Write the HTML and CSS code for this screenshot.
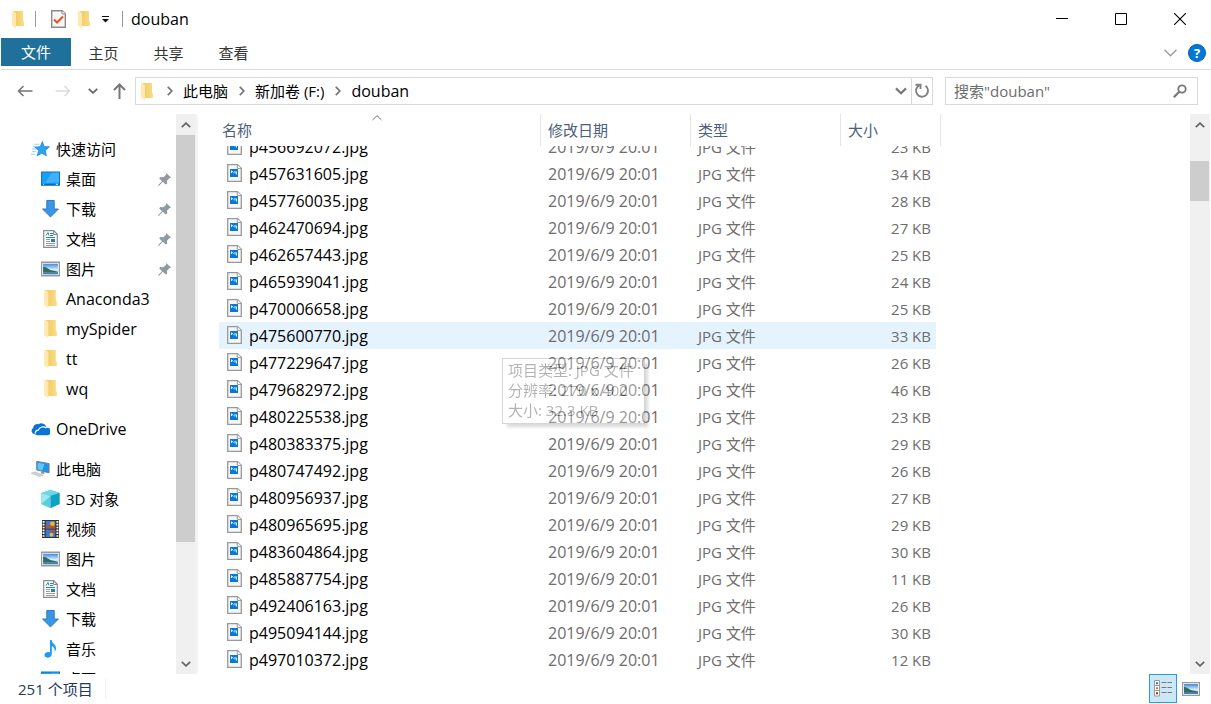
FILE: index.html
```html
<!DOCTYPE html>
<html lang="zh-CN">
<head>
    <meta charset="UTF-8">
    <meta name="viewport" content="width=device-width, initial-scale=1.0">
    <title>douban</title>
    <link rel="stylesheet" href="styles.css">
</head>
<body>
    <svg class="sprite" aria-hidden="true">
        <linearGradient id="g-folder"><stop offset="0" stop-color="#f0c964"/><stop offset="1" stop-color="#fbdd86"/></linearGradient>
        <linearGradient id="g-sky" x2="0" y2="1"><stop offset="0" stop-color="#3f86dc"/><stop offset=".55" stop-color="#d5ecf8"/><stop offset="1" stop-color="#8fc0dc"/></linearGradient>
        <symbol id="i-folder" viewBox="0 0 12 17"><path d="M2 0h9v10l1 1v4H2z" fill="url(#g-folder)"/><path d="M0 0h1l3 2v15l-3-2H0z" fill="#ffe9ac"/></symbol>
        <symbol id="i-check" viewBox="0 0 15 18"><path d="M.7.7h10.6l3 3v13.6H.7z" fill="#f7f7f7" stroke="#8b8b8b" stroke-width="1.4"/><path d="M11 .7v3.3h3.3" fill="#fff" stroke="#8b8b8b"/><path d="M3 9.500l3 3L12 6.500" fill="none" stroke="#e8521c" stroke-width="2"/></symbol>
        <symbol id="i-chev" viewBox="0 0 10 6"><path d="M.8.8L5 4.800 9.200.8" fill="none" stroke="currentColor" stroke-width="1.800"/></symbol>
        <symbol id="i-thin" viewBox="0 0 12 7"><path d="M.5.5L6 6 11.500.5" fill="none" stroke="currentColor" stroke-width="1.200"/></symbol>
        <symbol id="i-sort" viewBox="0 0 10 6"><path d="M.5 5L5 .7 9.500 5" fill="none" stroke="#777"/></symbol>
        <symbol id="i-arrow" viewBox="0 0 16 12"><path d="M15.500 6H1.500M6.500 1l-5 5 5 5" fill="none" stroke="currentColor" stroke-width="1.600"/></symbol>
        <symbol id="i-up" viewBox="0 0 13 16"><path d="M6.500 16V1.800M1 7l5.500-5.500L12 7" fill="none" stroke="currentColor" stroke-width="2"/></symbol>
        <symbol id="i-star" viewBox="0 0 18 16"><path d="M10.800 1l1.600 4.700 5.100.2-4 3.500 1 5.100-4.300-2.600-4.200 2.600 1.200-5L3.500 6.200l5.200-.4z" fill="#2ba2f2" stroke="#1781cc" stroke-width=".7"/><path d="M3 3.500h5M2 5.500h2M1 8h4M1 10.500h4M0 13h4" stroke="#8fcff8" stroke-width=".9"/></symbol>
        <symbol id="i-desktop" viewBox="0 0 18 14"><path d="M.5.5h17v12.500H.5z" fill="#18a0fb" stroke="#0c78c4"/><path d="M10 1h7v9L4 11z" fill="#3fb2ff"/><path d="M1 12h16" stroke="#075f9e"/><path d="M2 12h1M14 12h2" stroke="#fff"/></symbol>
        <symbol id="i-down" viewBox="0 0 16 17"><path d="M4.500.5h7v8h4L8 16 .5 8.500h4z" fill="#3c96e6" stroke="#2877bd" stroke-width=".9"/></symbol>
        <symbol id="i-doc" viewBox="0 0 15 18"><path d="M.7.7h10l3.600 3.500v13.100H.7z" fill="#fff" stroke="#8c8c8c" stroke-width="1.200"/><path d="M10.500.7V4.500h3.800" fill="none" stroke="#8c8c8c"/><path d="M3 5.500l2-3 1 3M7 3.500h3M7 5.500h3M3 7.500h9" fill="none" stroke="#1489d1"/><path d="M3 9.500h4M3 11.500h4M3 13.500h9M3 15.500h9" stroke="#999"/><path d="M8 9h4v3H8z" fill="#267dbd"/></symbol>
        <symbol id="i-pic" viewBox="0 0 18 14"><path d="M.6.6h16.800v12.800H.6z" fill="#fff" stroke="#999" stroke-width="1.200"/><path d="M2 2h14v10H2z" fill="url(#g-sky)"/><path d="M2 5c3-.5 5 3 9 3.500l5 1V10H2z" fill="#2e6e5e"/><path d="M2 10h14v2H2z" fill="#447fae"/></symbol>
        <symbol id="i-cloud" viewBox="0 0 18 12"><path d="M3.500 11A3.300 3.300 0 0 1 2 5 4 4 0 0 1 7 1.500 5 5 0 0 1 14 3l.5 2A3.500 3.500 0 0 1 16 12H6z" fill="#0a74d4"/><path d="M4 10.500c0-3 2-3.500 3-3.500 1-3 5-4 7.500-2" fill="none" stroke="#fff" stroke-width="1.100"/></symbol>
        <symbol id="i-pc" viewBox="0 0 20 17"><path d="M6 .5l13 2.300v9.700L6 9.500z" fill="#2196e8" stroke="#6c7a86"/><path d="M7 2l7 1.200-2 7-5-1.200z" fill="#63c4f8"/><path d="M11 11l3 1v2l-4-1z" fill="#8a98a3"/><path d="M0 13l4-1.500 9 3.500-4 1.500z" fill="#cdd4d9" stroke="#aeb8bf" stroke-width=".6"/></symbol>
        <symbol id="i-cube" viewBox="0 0 18 18"><path d="M9 0l9 3v11l-9 4-9-4V3z" fill="#29b5d0"/><path d="M9 0l9 3-9 3-9-3z" fill="#6bd8e8"/><path d="M0 3l9 3v12l-9-4z" fill="#9ce7f0"/><path d="M9 6l9-3v11l-9 4z" fill="#10a2c4"/><path d="M0 14l9-8v12z" fill="#5bcde0"/></symbol>
        <symbol id="i-film" viewBox="0 0 18 19"><path d="M0 0h18v19H0z" fill="#333"/><path d="M4 1h10v8H4zM4 10h10v8H4z" fill="#3b78d8"/><path d="M1.700 1v18M16.300 1v18" stroke="#fff" stroke-width="2" stroke-dasharray="1.800 1.200"/><circle cx="11" cy="4" r="2.500" fill="#f3b523"/><path d="M4 6c3-2 6 1 10 0v3H4z" fill="#b0592d"/><path d="M9 11h5v2H9z" fill="#d5402c"/><circle cx="10" cy="15.500" r="2" fill="#e7be2c"/></symbol>
        <symbol id="i-music" viewBox="0 0 12 18"><path d="M5.500 0h1.700c.3 4 4.500 4 4.300 8.500-.1 1.500-.6 2.500-1.500 3.500.7-3-.5-5-2.700-6v7.800c0 5-7.300 5-7.300 1.200 0-2.500 3.200-3.800 5.500-2.600z" fill="#1a9bf4"/></symbol>
        <symbol id="i-pin" viewBox="0 0 13 13"><path d="M8.300 0L13 4.500l-1.700.7-2.300 2.500.2 3-1.500.8-2.900-2.800L.8 13l-.8-.8 4-4-2.700-2.800.8-1.400 3.200.2L8 2z" fill="#8f9ba3"/></symbol>
        <symbol id="i-jpg" viewBox="0 0 15 18"><path d="M.7.7h9.800l3.800 3.500v13.100H.7z" fill="#f7f7f7" stroke="#999" stroke-width="1.300"/><path d="M10.300.7v3.700h4" fill="#fff" stroke="#999"/><path d="M3 5h8v8H3z" fill="#0a78d7"/><path d="M4.500 9V6.800l2 1.700M8 7v2.500M9.500 7.500v3" fill="none" stroke="#fff" stroke-width=".9"/></symbol>
        <symbol id="i-refresh" viewBox="0 0 16 16"><path d="M5 2.500A6 6 0 1 0 11.500 2.800M6.500 6V1.800H1.500" fill="none" stroke="#808080" stroke-width="1.900"/></symbol>
        <symbol id="i-search" viewBox="0 0 14 14"><circle cx="9" cy="5" r="3.700" fill="none" stroke="#777" stroke-width="1.800"/><path d="M6.300 7.700L.8 13.200" stroke="#777" stroke-width="2.200"/></symbol>
        <symbol id="i-details" viewBox="0 0 18 17"><path d="M.5.5h5v5h-5zM.5 5.500h5v5h-5zM.5 10.500h5v5.500h-5z" fill="#fff" stroke="#999"/><path d="M2 2.200h2v2H2z" fill="#2878b8"/><path d="M2 7.200h2v2H2z" fill="#a98c22"/><path d="M2 12.200h2v2H2z" fill="#b02a1a"/><path d="M7.500 2.500h5m1 0h4.500M7.500 7.500h5m1 0h4.500M7.500 12.500h5m1 0h4.500" stroke="#777"/></symbol>
    </svg>

    <header class="titlebar">
        <svg class="folder"><use href="#i-folder"/></svg>
        <span class="sep"></span>
        <button class="quick" aria-label="属性"><svg class="check"><use href="#i-check"/></svg></button>
        <button class="quick" aria-label="新建文件夹"><svg class="folder"><use href="#i-folder"/></svg></button>
        <button class="quick" aria-label="自定义快速访问工具栏"><svg class="custom" viewBox="0 0 7 7"><path d="M0 .5h7" stroke="#111"/><path d="M0 3h7L3.500 6.500z" fill="#111"/></svg></button>
        <span class="sep"></span>
        <h1 class="latin">douban</h1>
        <div class="window-buttons">
            <button aria-label="最小化"><svg viewBox="0 0 12 12"><path d="M0 5.500h12" stroke="#000"/></svg></button>
            <button aria-label="最大化"><svg viewBox="0 0 12 12"><path d="M.5.5h11v11H.5z" fill="none" stroke="#000"/></svg></button>
            <button aria-label="关闭"><svg viewBox="0 0 12 12"><path d="M0 0l12 12M12 0L0 12" stroke="#000" stroke-width="1.100"/></svg></button>
        </div>
    </header>

    <nav class="ribbon">
        <button class="tab file">文件</button>
        <button class="tab">主页</button>
        <button class="tab">共享</button>
        <button class="tab">查看</button>
        <button class="expand" aria-label="展开功能区"><svg class="thin"><use href="#i-thin"/></svg></button>
        <button class="help" aria-label="帮助">?</button>
    </nav>

    <div class="toolbar">
        <button class="nav" aria-label="返回"><svg class="arrow"><use href="#i-arrow"/></svg></button>
        <button class="nav forward" aria-label="前进"><svg class="arrow flip"><use href="#i-arrow"/></svg></button>
        <button class="nav recent" aria-label="最近浏览的位置"><svg class="chev"><use href="#i-chev"/></svg></button>
        <button class="nav up" aria-label="上移"><svg><use href="#i-up"/></svg></button>
        <div class="address">
            <svg class="folder"><use href="#i-folder"/></svg>
            <svg class="chev right"><use href="#i-chev"/></svg>
            <a href="#">此电脑</a>
            <svg class="chev right"><use href="#i-chev"/></svg>
            <a href="#">新加卷 (F:)</a>
            <svg class="chev right"><use href="#i-chev"/></svg>
            <a href="#" class="latin">douban</a>
            <button class="history" aria-label="以前的位置"><svg class="chev wide"><use href="#i-chev"/></svg></button>
            <button class="refresh" aria-label="刷新"><svg><use href="#i-refresh"/></svg></button>
        </div>
        <div class="search">
            <input type="text" placeholder="搜索&quot;douban&quot;" aria-label="搜索">
            <svg><use href="#i-search"/></svg>
        </div>
    </div>

    <div class="content">
        <aside class="sidebar">
            <ul>
                <li><a class="top" href="#"><svg><use href="#i-star"/></svg>快速访问</a></li>
                <li><a href="#"><svg><use href="#i-desktop"/></svg>桌面</a><svg class="pin"><use href="#i-pin"/></svg></li>
                <li><a href="#"><svg><use href="#i-down"/></svg>下载</a><svg class="pin"><use href="#i-pin"/></svg></li>
                <li><a href="#"><svg><use href="#i-doc"/></svg>文档</a><svg class="pin"><use href="#i-pin"/></svg></li>
                <li><a href="#"><svg><use href="#i-pic"/></svg>图片</a><svg class="pin"><use href="#i-pin"/></svg></li>
                <li><a class="latin" href="#"><svg><use href="#i-folder"/></svg>Anaconda3</a></li>
                <li><a class="latin" href="#"><svg><use href="#i-folder"/></svg>mySpider</a></li>
                <li><a class="latin" href="#"><svg><use href="#i-folder"/></svg>tt</a></li>
                <li><a class="latin" href="#"><svg><use href="#i-folder"/></svg>wq</a></li>
            </ul>
            <ul>
                <li><a class="top latin" href="#"><svg><use href="#i-cloud"/></svg>OneDrive</a></li>
            </ul>
            <ul>
                <li><a class="top" href="#"><svg><use href="#i-pc"/></svg>此电脑</a></li>
                <li><a href="#"><svg><use href="#i-cube"/></svg>3D 对象</a></li>
                <li><a href="#"><svg><use href="#i-film"/></svg>视频</a></li>
                <li><a href="#"><svg><use href="#i-pic"/></svg>图片</a></li>
                <li><a href="#"><svg><use href="#i-doc"/></svg>文档</a></li>
                <li><a href="#"><svg><use href="#i-down"/></svg>下载</a></li>
                <li><a href="#"><svg><use href="#i-music"/></svg>音乐</a></li>
                <li><a href="#"><svg><use href="#i-desktop"/></svg>桌面</a></li>
            </ul>
        </aside>
        <div class="scrollbar side-bar">
            <button aria-label="向上滚动"><svg class="chev flip"><use href="#i-chev"/></svg></button>
            <div class="track"><div class="thumb"></div></div>
            <button aria-label="向下滚动"><svg class="chev"><use href="#i-chev"/></svg></button>
        </div>

        <main class="files" id="files">
            <table>
                <thead>
                    <tr>
                        <th class="name">名称<svg class="sort"><use href="#i-sort"/></svg></th>
                        <th class="date">修改日期</th>
                        <th class="type">类型</th>
                        <th class="size">大小</th>
                    </tr>
                </thead>
                <tbody id="rows"></tbody>
            </table>
            <div class="tooltip">项目类型: JPG 文件<br>分辨率: 270 x 400<br>大小: 32.3 KB</div>
        </main>
        <div class="scrollbar">
            <button aria-label="向上滚动"><svg class="chev flip"><use href="#i-chev"/></svg></button>
            <div class="track main-track"><div class="thumb"></div></div>
            <button aria-label="向下滚动"><svg class="chev"><use href="#i-chev"/></svg></button>
        </div>
    </div>

    <footer class="status">
        <span class="count">251 个项目</span>
        <button class="view active" aria-label="详细信息"><svg class="details"><use href="#i-details"/></svg></button>
        <button class="view" aria-label="大缩略图"><svg class="thumbs"><use href="#i-pic"/></svg></button>
    </footer>

    <script>
        const files = [
            ['p456692072', 23], ['p457631605', 34], ['p457760035', 28], ['p462470694', 27],
            ['p462657443', 25], ['p465939041', 24], ['p470006658', 25], ['p475600770', 33],
            ['p477229647', 26], ['p479682972', 46], ['p480225538', 23], ['p480383375', 29],
            ['p480747492', 26], ['p480956937', 27], ['p480965695', 29], ['p483604864', 30],
            ['p485887754', 11], ['p492406163', 26], ['p495094144', 30], ['p497010372', 12]
        ];
        const hovered = 'p475600770';

        document.getElementById('rows').innerHTML = files.map(([name, size]) => `
            <tr class="${name === hovered ? 'hover' : ''}">
                <td class="name latin"><svg><use href="#i-jpg"/></svg>${name}.jpg</td>
                <td class="date latin">2019/6/9 20:01</td>
                <td class="type">JPG 文件</td>
                <td class="size">${size} KB</td>
            </tr>`).join('');

        // the list is scrolled half a row down
        document.getElementById('files').scrollTop = 13;
    </script>
</body>
</html>
```
FILE: styles.css
```css
* { box-sizing: border-box; }
body {
    display: flex;
    flex-direction: column;
    height: 100vh;
    margin: 0;
    padding-left: 1px;
    overflow: hidden;
    background: #fff;
    color: #000;
    font: 15px/20px "Open Sans", "Noto Sans CJK SC", sans-serif;
}
button { display: flex; align-items: center; justify-content: center; padding: 0; border: 0; background: none; color: inherit; font: inherit; }
a { color: inherit; text-decoration: none; }
svg { flex: none; }
.sprite { position: absolute; width: 0; height: 0; }
.latin { font-size: 16px; }
.folder { width: 12px; height: 17px; }
.chev { width: 10px; height: 6px; color: #666; }
.chev.wide { width: 12px; height: 8px; }
.right { transform: rotate(-90deg); }
.flip { transform: rotate(180deg); }

/* title bar */
.titlebar { display: flex; align-items: center; flex: none; height: 38px; padding: 0 2px 0 11px; }
.titlebar .sep { width: 1px; height: 16px; margin: 0 11px; background: #999; }
.titlebar .quick + .sep { margin: 0 8px 0 13px; }
.titlebar h1 { margin: 0; font-weight: normal; }
.quick { margin-left: 4px; }
.quick + .quick { margin-left: 12px; }
.check { width: 15px; height: 18px; }
.custom { width: 7px; height: 7px; }
.window-buttons { display: flex; margin-left: auto; }
.window-buttons button { width: 59px; height: 38px; }
.window-buttons svg { width: 12px; height: 12px; }

/* ribbon tabs */
.ribbon { display: flex; flex: none; height: 32px; padding-right: 5px; border-bottom: 1px solid #dadbdc; }
.tab { width: 65px; height: 29px; color: #333; }
.tab.file { width: 70px; height: 28px; background: #1f709b; color: #fff; }
.expand { height: 30px; margin-left: auto; color: #999; }
.thin { width: 13px; height: 8px; }
.help { width: 18px; height: 18px; margin: 6px 0 0 11px; border: 1px solid #0b5ca8; border-radius: 50%; background: #0078d7; color: #fff; font-weight: bold; font-size: 13px; }

/* navigation row */
.toolbar { display: flex; align-items: center; flex: none; height: 44px; padding: 0 13px 2px 5px; }
.nav { width: 38px; height: 28px; color: #777; }
.nav.forward { color: #dcdcdc; }
.nav.recent { width: 22px; }
.nav.up { width: 31px; }
.nav.up svg { width: 13px; height: 16px; }
.arrow { width: 16px; height: 12px; }
.address { display: flex; align-items: center; flex: 1; height: 28px; padding-left: 5px; border: 1px solid #d9d9d9; }
.address .chev { color: #777; }
.address .right { margin: 0 8px 0 9px; }
.address .folder + .right { margin-left: 12px; }
.history { width: 20px; height: 26px; margin-left: auto; }
.refresh { width: 21px; height: 26px; border-left: 1px solid #d9d9d9; }
.refresh svg { width: 16px; height: 16px; }
.search { display: flex; align-items: center; width: 253px; height: 28px; margin-left: 12px; padding: 0 10px 0 8px; border: 1px solid #d9d9d9; }
.search input { flex: 1; min-width: 0; padding: 0; border: 0; outline: 0; background: none; font: inherit; }
.search input::placeholder { color: #6d6d6d; opacity: 1; }
.search svg { width: 14px; height: 14px; }

/* folder tree */
.content { display: flex; flex: 1; min-height: 0; margin-right: 1px; }
.sidebar { width: 175px; padding-top: 20px; overflow: hidden; }
.sidebar ul { margin: 0 0 10px; padding: 0; list-style: none; }
.sidebar li { display: flex; align-items: center; height: 30px; }
.sidebar a { display: flex; align-items: center; flex: 1; gap: 6px; padding-left: 40px; }
.sidebar a.top { padding-left: 30px; }
.sidebar a svg { width: 19px; height: 18px; }
.sidebar .pin { width: 13px; height: 13px; margin-right: 5px; }

.scrollbar { display: flex; flex-direction: column; flex: none; width: 20px; background: #f0f0f0; }
.scrollbar button { height: 21px; padding-right: 1px; }
.scrollbar .track { flex: 1; padding-right: 1px; }
.thumb { height: 407px; max-height: 100%; background: #cdcdcd; }
.main-track { padding-top: 26px; }
.main-track .thumb { height: 40px; }
.side-bar { margin-right: 2px; box-shadow: 3px 0 0 -1px #f5f5f5; }

/* file list */
.files { position: relative; flex: 1; min-width: 0; padding: 0 0 8px 21px; overflow: hidden; }
table { width: 722px; border-collapse: separate; border-spacing: 0; table-layout: fixed; }
th { position: sticky; top: 0; height: 32px; padding: 0 7px 1px; border-right: 1px solid #e5e5e5; background: #fff; color: #4c607a; font-weight: normal; text-align: left; }
th.name { width: 322px; padding-left: 3px; }
th.date, th.type { width: 150px; }
th.size { width: 100px; }
.sort { position: absolute; top: 1px; left: 153px; width: 10px; height: 6px; }
td { height: 27px; padding: 0 7px; color: #6d6d6d; white-space: nowrap; }
td.name { padding-left: 8px; color: #000; }
td.name svg { width: 15px; height: 18px; margin-right: 7px; vertical-align: -2px; }
td.size { padding-right: 5px; border-right: 5px solid transparent; background-clip: padding-box; text-align: right; }
.hover td { background-color: #e5f3ff; }
.tooltip { position: absolute; top: 257px; left: 304px; width: 143px; padding: 1px 5px 3px; border: 1px solid #767676; background: #fff; box-shadow: 4px 4px 3px -1px #888; opacity: 0.3; white-space: nowrap; }

/* status bar */
.status { display: flex; align-items: center; flex: none; height: 30px; padding: 0 6px 1px 17px; color: #1e395b; }
.count { margin-right: auto; padding-right: 12px; border-right: 1px solid #f0f0f0; }
.view { width: 28px; height: 29px; }
.view.active { border: 1px solid #26a0da; background: #cce8f6; }
.details { width: 18px; height: 17px; }
.thumbs { width: 18px; height: 14px; }
```
